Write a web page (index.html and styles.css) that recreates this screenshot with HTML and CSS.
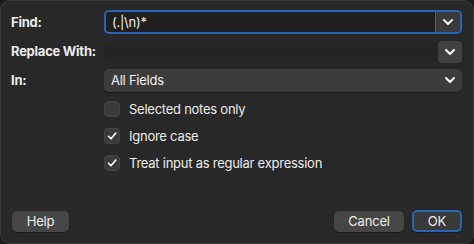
FILE: index.html
```html
<!DOCTYPE html>
<html>
<head>
<meta charset="utf-8">
<link rel="stylesheet" href="styles.css">
</head>
<body>
<div class="window">
  <div class="form">
    <label class="label">Find:</label>
    <div class="combo focused">
      <div class="field">(.|\n)*</div>
      <div class="dropbtn inset"><svg width="12" height="8" viewBox="0 0 12 8"><path d="M2 2 L6 6 L10 2" fill="none" stroke="#fff" stroke-width="2" stroke-linecap="round" stroke-linejoin="round"/></svg></div>
    </div>

    <label class="label">Replace With:</label>
    <div class="combo plain">
      <div class="field"></div>
      <div class="dropbtn"><svg width="12" height="8" viewBox="0 0 12 8"><path d="M2 2 L6 6 L10 2" fill="none" stroke="#fff" stroke-width="2" stroke-linecap="round" stroke-linejoin="round"/></svg></div>
    </div>

    <label class="label">In:</label>
    <div class="popup">
      <span>All Fields</span>
      <svg width="12" height="8" viewBox="0 0 12 8"><path d="M2 2 L6 6 L10 2" fill="none" stroke="#fff" stroke-width="2" stroke-linecap="round" stroke-linejoin="round"/></svg>
    </div>

    <div class="checks">
      <div class="check"><span class="box"></span><span>Selected notes only</span></div>
      <div class="check"><span class="box"><svg width="14" height="14" viewBox="0 0 14 14"><path d="M3.5 7.3 L6 9.8 L10.8 4" fill="none" stroke="#fff" stroke-width="1.6" stroke-linecap="round" stroke-linejoin="round"/></svg></span><span>Ignore case</span></div>
      <div class="check"><span class="box"><svg width="14" height="14" viewBox="0 0 14 14"><path d="M3.5 7.3 L6 9.8 L10.8 4" fill="none" stroke="#fff" stroke-width="1.6" stroke-linecap="round" stroke-linejoin="round"/></svg></span><span>Treat input as regular expression</span></div>
    </div>
  </div>

  <div class="footer">
    <button class="btn help">Help</button>
    <div class="right">
      <button class="btn cancel">Cancel</button>
      <button class="btn ok">OK</button>
    </div>
  </div>
</div>
</body>
</html>
```
FILE: styles.css
```css
html, body {
  margin: 0;
  padding: 0;
  background: #1b1b1b;
}
body {
  font-family: Inter, "Noto Sans", sans-serif;
  font-size: 13px;
  letter-spacing: -0.25px;
  color: #e6e6e6;
}
.window {
  width: 474px;
  height: 244px;
  box-sizing: border-box;
  background: #282828;
  border: 1px solid #3a3a3a;
  border-radius: 10px;
  padding: 9px 11px 11px 10px;
  display: flex;
  flex-direction: column;
  justify-content: space-between;
}
.form {
  display: grid;
  grid-template-columns: 93px 1fr;
  grid-template-rows: 24px 24px 23px auto;
  row-gap: 5px;
  align-items: center;
}
.label {
  font-weight: 700;
  color: #ececec;
  font-size: 13px;
}
.combo {
  display: flex;
  height: 24px;
  box-sizing: border-box;
  border-radius: 5px;
}
.combo.focused {
  border: 2px solid #2a64b4;
  background: #1f1f1f;
}
.combo.plain {
  background: #242424;
  margin-top: 2px;
  height: 22px;
}
.field {
  flex: 1;
  padding-left: 6px;
  line-height: 20px;
  color: #f0f0f0;
}
.dropbtn {
  width: 24px;
  background: #404040;
  border-radius: 4px;
  display: flex;
  align-items: center;
  justify-content: center;
}
.dropbtn.inset {
  border-radius: 0 3px 3px 0;
  background: #3a3a3a;
  border-left: 1px solid #2a64b4;
}
.popup {
  height: 23px;
  margin-top: 1px;
  box-sizing: border-box;
  background: #3c3c3c;
  border-radius: 5px;
  display: flex;
  align-items: center;
  justify-content: space-between;
  padding: 0 6px 0 7px;
  color: #f0f0f0;
  box-shadow: 0 1px 1px rgba(0,0,0,0.35);
}
.checks {
  grid-column: 2;
  display: flex;
  flex-direction: column;
  gap: 11px;
  padding-top: 5px;
}
.check {
  display: flex;
  align-items: center;
  gap: 9px;
  height: 16px;
  color: #ececec;
}
.box {
  width: 16px;
  height: 16px;
  box-sizing: border-box;
  border-radius: 4px;
  background: #3a3a3a;
  border: 1px solid #444;
  display: flex;
  align-items: center;
  justify-content: center;
}
.footer {
  display: flex;
  justify-content: space-between;
  align-items: center;
  padding-left: 1px;
}
.right {
  display: flex;
  gap: 8px;
  align-items: center;
}
.btn {
  font-family: Inter, "Noto Sans", sans-serif;
  font-size: 13px;
  letter-spacing: -0.2px;
  color: #ececec;
  background: #464646;
  border: none;
  border-radius: 5px;
  height: 21px;
  padding: 0;
  box-shadow: 0 1px 1px rgba(0,0,0,0.35);
}
.help { width: 57px; }
.cancel { width: 70px; }
.ok {
  width: 50px;
  height: 22px;
  border: 2px solid #2a64b4;
  background: #3a3a3a;
}
```
